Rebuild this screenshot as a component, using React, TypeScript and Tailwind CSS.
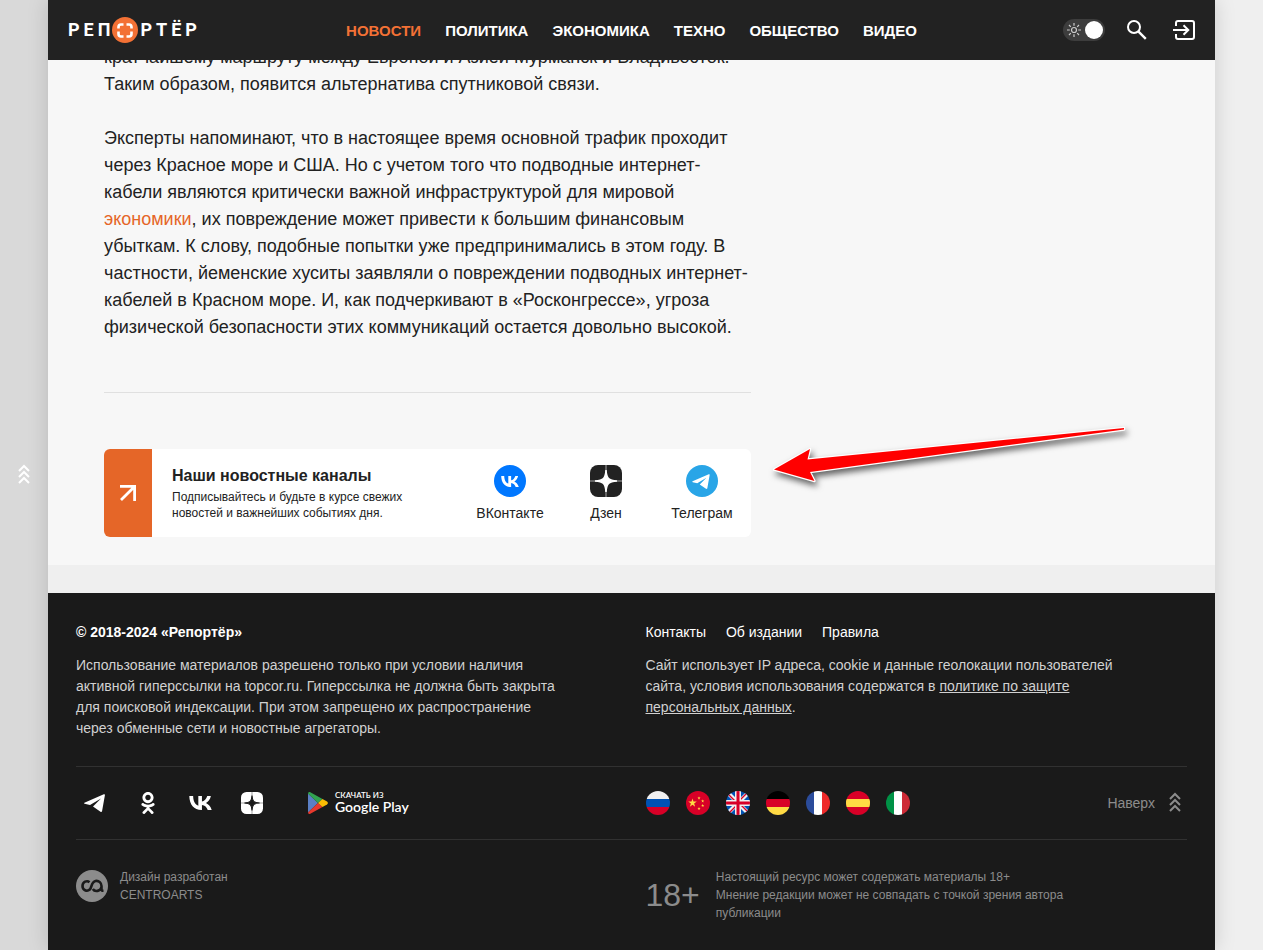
import React, { useState } from 'react';
import { FaOdnoklassniki } from 'react-icons/fa';

const menu = ['Новости', 'Политика', 'Экономика', 'Техно', 'Общество', 'Видео'];

function VkIcon({ className }: { className?: string }) {
  return (
    <svg viewBox="4 7.3 16.1 10" fill="currentColor" className={className} aria-hidden="true">
      <path d="M6.79 7.3H4.05c.13 6.24 3.25 9.99 8.72 9.99h.31v-3.57c2.01.2 3.53 1.67 4.14 3.57h2.84c-.78-2.84-2.83-4.41-4.11-5.01 1.28-.74 3.08-2.54 3.51-4.98h-2.58c-.56 1.98-2.22 3.78-3.8 3.95V7.3H10.5v6.92c-1.6-.4-3.62-2.34-3.71-6.92Z" />
    </svg>
  );
}

function TelegramIcon({ className }: { className?: string }) {
  return (
    <svg viewBox="0 0 21 18" fill="currentColor" className={className} aria-hidden="true">
      <path d="M.4 8.800L19.800.300c.8-.3 1.300 0 1.100.9L18.100 17c-.2.9-.9 1.100-1.600.7L9 12.500l8-8L6 11 .600 9.800C-.1 9.600-.1 9 .4 8.800z" />
    </svg>
  );
}

function ZenIcon({ className, star }: { className?: string; star: string }) {
  return (
    <svg viewBox="0 0 32 32" className={className} aria-hidden="true">
      <rect width="32" height="32" rx="8" fill="currentColor" />
      <path d="M16 0v32M0 16h32" stroke={star} strokeOpacity="0.6" />
      <path d="M16 5C16.600 13.500 18.500 15.400 27 16 18.500 16.600 16.600 18.500 16 27 15.400 18.500 13.500 16.600 5 16 13.500 15.400 15.400 13.500 16 5z" fill={star} stroke={star} strokeWidth="1.500" />
    </svg>
  );
}

function ChevronsUp({ className }: { className?: string }) {
  return (
    <svg
      viewBox="0 0 12 20"
      fill="none"
      stroke="currentColor"
      strokeWidth="2"
      className={`overflow-visible ${className}`}
      aria-hidden="true"
    >
      <path d="M1 6l5-5 5 5M1 12l5-5 5 5M1 18l5-5 5 5" />
    </svg>
  );
}

function Logo() {
  return (
    <a href="#" aria-label="Репортёр" className="flex items-center font-['Roboto',sans-serif] text-lg font-bold text-white">
      <span className="tracking-[4px]">РЕП</span>
      <svg viewBox="0 0 26 26" className="mr-0.5 -ml-0.5 h-[26px] w-[26px]" aria-hidden="true">
        <circle cx="13" cy="13" r="13" fill="#f37135" />
        <path
          d="M11.500 7.500H9A2.500 2.500 0 0 0 6.500 10v1.500M14.500 7.500H17a2.500 2.500 0 0 1 2.500 2.500v1.500M6.500 14.500V17A2.500 2.500 0 0 0 9 19.500h2.500M19.500 14.500V17a2.500 2.500 0 0 1-2.500 2.500h-2.500"
          fill="none"
          stroke="#fff"
          strokeWidth="2.600"
        />
      </svg>
      <span className="tracking-[4px]">РТЁР</span>
    </a>
  );
}

function Header() {
  const [light, setLight] = useState(true);

  return (
    <header className="relative z-10 flex h-[60px] items-center bg-[#222] px-5">
      <div className="flex flex-1">
        <Logo />
      </div>
      <nav className="flex gap-6 pt-0.5">
        {menu.map((item, i) => (
          <a
            key={item}
            href="#"
            className={`text-[15px] font-bold uppercase ${i === 0 ? 'text-[#f37135]' : 'text-white'}`}
          >
            {item}
          </a>
        ))}
      </nav>
      <div className="flex flex-1 items-center justify-end text-white">
        <label className="relative flex h-[22px] w-[42px] cursor-pointer items-center rounded-full bg-[#3d3d3d] pr-0.5 pl-1">
          <input
            type="checkbox"
            className="peer sr-only"
            checked={light}
            onChange={(e) => setLight(e.target.checked)}
            aria-label="Светлая тема"
          />
          <svg viewBox="0 0 14 14" className="h-3.5 w-3.5" fill="none" stroke="#ccc" aria-hidden="true">
            <circle cx="7" cy="7" r="2.500" strokeWidth="1.200" />
            <path
              d="M7 0v2.800M7 11.200V14M0 7h2.800M11.200 7H14M2 2l1.800 1.800M10.200 10.200L12 12M12 2l-1.800 1.800M3.800 10.200L2 12"
              strokeWidth="1.200"
            />
          </svg>
          <span className="ml-auto h-[18px] w-[18px] rounded-full bg-white peer-checked:order-last"></span>
        </label>
        <button type="button" aria-label="Поиск" className="ml-[22px]">
          <svg viewBox="0 0 20 20" className="h-5 w-5" fill="none" stroke="currentColor" strokeWidth="2">
            <circle cx="7" cy="7" r="6" />
            <path d="M11.300 11.300l7.500 7.500" strokeWidth="2.400" />
          </svg>
        </button>
        <button type="button" aria-label="Войти" className="ml-[26px]">
          <svg viewBox="0 0 22 20" className="h-5 w-[22px]" fill="none" stroke="currentColor" strokeWidth="2">
            <path d="M3 6V3a2 2 0 0 1 2-2h14a2 2 0 0 1 2 2v14a2 2 0 0 1-2 2H5a2 2 0 0 1-2-2v-3M0 10h15M10.500 5.200L15.300 10l-4.800 4.800" />
          </svg>
        </button>
      </div>
    </header>
  );
}

function Channels() {
  return (
    <section className="flex max-w-[647px] overflow-hidden rounded-md bg-white">
      <div className="flex w-12 shrink-0 items-center justify-center bg-[#e56628] text-white">
        <svg viewBox="0 0 16 16" className="h-4 w-4" fill="none" stroke="currentColor" strokeWidth="2.800" aria-hidden="true">
          <path d="M0 1.400h14.600V16M14.600 1.400L1 15" />
        </svg>
      </div>
      <div className="flex-1 py-4 pl-5">
        <h2 className="mb-0.5 text-base leading-[22px] font-bold">Наши новостные каналы</h2>
        <p className="max-w-[250px] text-xs leading-4">
          Подписывайтесь и будьте в курсе свежих новостей и важнейших событиях дня.
        </p>
      </div>
      <div className="flex py-4 pr-px text-sm leading-4">
        <a href="#" className="flex w-24 flex-col items-center gap-2">
          <span className="flex h-8 w-8 items-center justify-center rounded-full bg-[#07f] text-white">
            <VkIcon className="h-[11px] w-[18px]" />
          </span>
          ВКонтакте
        </a>
        <a href="#" className="flex w-24 flex-col items-center gap-2">
          <ZenIcon className="h-8 w-8 text-[#222]" star="#fff" />
          Дзен
        </a>
        <a href="#" className="flex w-24 flex-col items-center gap-2">
          <span className="flex h-8 w-8 items-center justify-center rounded-full bg-[#29a5e7] pr-0.5 text-white">
            <TelegramIcon className="h-[15px] w-[18px]" />
          </span>
          Телеграм
        </a>
      </div>
    </section>
  );
}

function RedArrow() {
  return (
    <svg
      viewBox="0 0 390 90"
      className="pointer-events-none absolute top-[410px] left-[712px] h-[90px] w-[390px] drop-shadow-[2px_4px_3px_rgba(0,0,0,0.6)]"
      aria-hidden="true"
    >
      <path
        d="M14 59.500L50 39l-2.500 10.500L364 18v1.500L50 62l4.500 9z"
        fill="#f00"
        stroke="#fff"
        strokeWidth="2.400"
        strokeLinejoin="round"
        className="[paint-order:stroke]"
      />
    </svg>
  );
}

function GooglePlay() {
  return (
    <a href="#" className="ml-9 flex items-center gap-[7px] text-white">
      <svg viewBox="0 0 20 22" className="h-[22px] w-5" aria-hidden="true">
        <path d="M0 1.500v19L10 11z" fill="#5b7fc4" />
        <path d="M0 1.500C0 .3 1.200-.4 2.300.2L14.500 7 10 11z" fill="#32a350" />
        <path d="M0 20.500c0 1.200 1.200 1.900 2.300 1.300L14.500 15 10 11z" fill="#e8392d" />
        <path d="M14.500 7l4.500 2.600c1.200.7 1.200 2.100 0 2.800L14.500 15 10 11z" fill="#fbbc04" />
      </svg>
      <span className="flex flex-col font-['Lato',sans-serif] font-semibold">
        <span className="text-[8px] leading-[8px] uppercase">Скачать из</span>
        <span className="text-sm leading-4">Google Play</span>
      </span>
    </a>
  );
}

function Flag({ name, children }: { name: string; children: React.ReactNode }) {
  return (
    <a href="#" aria-label={name} className="h-6 w-6 overflow-hidden rounded-full">
      <svg viewBox="0 0 24 24" className="h-6 w-6">
        {children}
      </svg>
    </a>
  );
}

const STAR = 'M0-1L.22-.31.95-.31.36.12.59.81 0 .38-.59.81-.36.12-.95-.31-.22-.31z';

function Flags() {
  return (
    <div className="flex gap-4">
      <Flag name="Русский">
        <path d="M0 0h24v8H0z" fill="#f0f0f0" />
        <path d="M0 8h24v8H0z" fill="#0052b4" />
        <path d="M0 16h24v8H0z" fill="#d80027" />
      </Flag>
      <Flag name="中文">
        <path d="M0 0h24v24H0z" fill="#d80027" />
        <g fill="#ffda44">
          <path d={STAR} transform="translate(6.500 12) scale(4.500)" />
          <path d={STAR} transform="translate(13 7) scale(1.700)" />
          <path d={STAR} transform="translate(16.700 10) scale(1.700)" />
          <path d={STAR} transform="translate(16.700 14.500) scale(1.700)" />
          <path d={STAR} transform="translate(13 17.500) scale(1.700)" />
        </g>
      </Flag>
      <Flag name="English">
        <path d="M0 0h24v24H0z" fill="#0052b4" />
        <path d="M2 2l20 20M22 2L2 22" stroke="#f0f0f0" strokeWidth="4" />
        <path d="M2 3l7 7M22 21l-7-7M21 2l-7 7M3 22l7-7" stroke="#d80027" strokeWidth="1.400" />
        <path d="M12 0v24M0 12h24" stroke="#f0f0f0" strokeWidth="6" />
        <path d="M12 0v24M0 12h24" stroke="#d80027" strokeWidth="3" />
      </Flag>
      <Flag name="Deutsch">
        <path d="M0 0h24v8H0z" fill="#000" />
        <path d="M0 8h24v8H0z" fill="#d80027" />
        <path d="M0 16h24v8H0z" fill="#ffda44" />
      </Flag>
      <Flag name="Français">
        <path d="M0 0h8v24H0z" fill="#2b4c9b" />
        <path d="M8 0h8v24H8z" fill="#fff" />
        <path d="M16 0h8v24h-8z" fill="#ee2a2a" />
      </Flag>
      <Flag name="Español">
        <path d="M0 0h24v24H0z" fill="#d80027" />
        <path d="M0 8h24v8H0z" fill="#ffda44" />
      </Flag>
      <Flag name="Italiano">
        <path d="M0 0h8v24H0z" fill="#009246" />
        <path d="M8 0h8v24H8z" fill="#fff" />
        <path d="M16 0h8v24h-8z" fill="#ce2b37" />
      </Flag>
    </div>
  );
}

function Footer() {
  return (
    <footer className="bg-[#1a1a1a] px-7 pt-[29px] pb-7 text-sm text-[#d1d1d1]">
      <div className="grid grid-cols-2 gap-7 border-b border-[#313131] pb-[27px] leading-[21px]">
        <div>
          <p className="mb-3 font-bold text-white">© 2018-2024 «Репортёр»</p>
          <p className="max-w-[490px]">
            Использование материалов разрешено только при условии наличия активной гиперссылки на topcor.ru.
            Гиперссылка не должна быть закрыта для поисковой индексации. При этом запрещено их распространение
            через обменные сети и новостные агрегаторы.
          </p>
        </div>
        <div>
          <nav className="mb-3 flex gap-5 text-white">
            <a href="#">Контакты</a>
            <a href="#">Об издании</a>
            <a href="#">Правила</a>
          </nav>
          <p className="max-w-[490px]">
            Сайт использует IP адреса, cookie и данные геолокации пользователей сайта, условия использования
            содержатся в{' '}
            <a href="#" className="underline">
              политике по защите персональных данных
            </a>
            .
          </p>
        </div>
      </div>

      <div className="grid h-[73px] grid-cols-2 items-center gap-7 border-b border-[#313131]">
        <div className="flex items-center text-white">
          <div className="flex gap-3">
            <a href="#" aria-label="Телеграм" className="flex h-10 w-10 items-center justify-center pr-1">
              <TelegramIcon className="h-[18px] w-[21px]" />
            </a>
            <a href="#" aria-label="Одноклассники" className="flex h-10 w-10 items-center justify-center">
              <FaOdnoklassniki size={22} />
            </a>
            <a href="#" aria-label="ВКонтакте" className="flex h-10 w-10 items-center justify-center">
              <VkIcon className="h-3.5 w-[23px]" />
            </a>
            <a href="#" aria-label="Дзен" className="flex h-10 w-10 items-center justify-center">
              <ZenIcon className="h-[22px] w-[22px]" star="#1a1a1a" />
            </a>
          </div>
          <GooglePlay />
        </div>
        <div className="flex items-center justify-between">
          <Flags />
          <a href="#" className="mr-1.5 flex items-center gap-3.5 text-[#8c8c8c]">
            Наверх
            <ChevronsUp className="h-5 w-3" />
          </a>
        </div>
      </div>

      <div className="grid grid-cols-2 gap-7 pt-7 text-xs leading-[18px] text-[#8c8c8c]">
        <a href="#" className="flex items-start gap-3">
          <svg viewBox="0 0 32 32" className="mt-0.5 h-8 w-8" aria-hidden="true">
            <circle cx="16" cy="16" r="16" fill="#8c8c8c" />
            <path
              d="M13.500 12.200C11 10 6.500 11.800 6.500 16s4.500 6 7.300 3.600C16 17.500 15 12 19.500 11c3.500-.6 6 2 6 5v3.500c0 .8.600 1.300 2 1.300M25.300 17.500C24.500 21 19 22.500 16.800 19"
              fill="none"
              stroke="#1a1a1a"
              strokeWidth="2.600"
            />
          </svg>
          <span>
            Дизайн разработан
            <br />
            CENTROARTS
          </span>
        </a>
        <div className="flex items-center gap-4">
          <span className="text-[32px]">18+</span>
          <p className="max-w-[380px]">
            Настоящий ресурс может содержать материалы 18+
            <br />
            Мнение редакции может не совпадать с точкой зрения автора публикации
          </p>
        </div>
      </div>
    </footer>
  );
}

export default function App() {
  return (
    <div className="flex min-h-screen bg-[#efefef] font-['Liberation_Sans',Arial,sans-serif] text-[#222]">
      <button type="button" aria-label="Наверх" className="flex w-12 shrink-0 items-center justify-center bg-[#d9d9d9] text-white">
        <ChevronsUp className="h-5 w-3" />
      </button>

      <div className="relative min-w-0 flex-1 bg-[#efefef] shadow-[0_0_20px_rgba(0,0,0,0.15)]">
        <Header />

        <main className="bg-[#f7f7f7] px-14 pb-7">
          {/* первая строка уходит под шапку */}
          <article className="-mt-4 max-w-[647px] border-b border-[#e0e0e0] pb-[51px] text-lg leading-[27px]">
            <p className="mb-[27px]">
              кратчайшему маршруту между Европой и Азией Мурманск и Владивосток. Таким образом, появится
              альтернатива спутниковой связи.
            </p>
            <p>
              Эксперты напоминают, что в настоящее время основной трафик проходит через Красное море и США. Но с
              учетом того что подводные интернет-кабели являются критически важной инфраструктурой для мировой{' '}
              <a href="#" className="text-[#e56628]">
                экономики
              </a>
              , их повреждение может привести к большим финансовым убыткам. К слову, подобные попытки уже
              предпринимались в этом году. В частности, йеменские хуситы заявляли о повреждении подводных
              интернет-кабелей в Красном море. И, как подчеркивают в «Росконгрессе», угроза физической
              безопасности этих коммуникаций остается довольно высокой.
            </p>
          </article>
          <div className="mt-14">
            <Channels />
          </div>
        </main>

        <div className="h-7"></div>
        <Footer />
        <RedArrow />
      </div>

      <div className="w-12 shrink-0"></div>
    </div>
  );
}
